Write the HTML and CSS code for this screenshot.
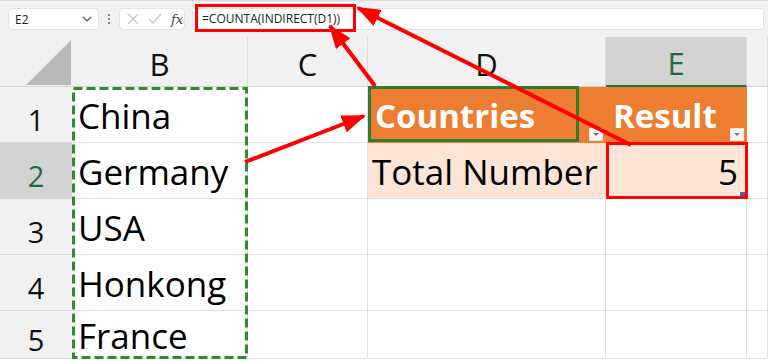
FILE: index.html
```html
<!DOCTYPE html>
<html lang="en">
<head>
    <meta charset="UTF-8">
    <meta name="viewport" content="width=device-width, initial-scale=1.0">
    <title>COUNTA with INDIRECT</title>
    <link rel="stylesheet" href="styles.css">
</head>
<body>
<div class="sheet">
    <div class="formula-bar">
        <div class="name-box">
            <span>E2</span>
            <svg class="chevron" width="10" height="6" viewBox="0 0 10 6"><path d="M1 1 L5 5 L9 1" fill="none" stroke="#555" stroke-width="1.2"/></svg>
        </div>
        <div class="dots"><i></i><i></i><i></i></div>
        <div class="fx-box">
            <svg width="12" height="12" viewBox="0 0 12 12"><path d="M1 1 L11 11 M11 1 L1 11" stroke="#c6c6c6" stroke-width="1.3"/></svg>
            <svg width="14" height="12" viewBox="0 0 14 12"><path d="M1 6 L5 10 L13 1" fill="none" stroke="#c6c6c6" stroke-width="1.3"/></svg>
            <span class="fx">fx</span>
        </div>
        <div class="formula-input">=COUNTA(INDIRECT(D1))</div>
    </div>

    <div class="grid">
        <div class="corner">
            <svg width="72" height="50" viewBox="0 0 72 50"><polygon points="26,48 71,3 71,48" fill="#b9b9b9"/></svg>
        </div>
        <div class="col-head">B</div>
        <div class="col-head">C</div>
        <div class="col-head">D</div>
        <div class="col-head active">E</div>
        <div class="col-head"></div>

        <div class="row-head">1</div>
        <div class="cell">China</div>
        <div class="cell"></div>
        <div class="cell table-head">Countries<span class="filter"></span></div>
        <div class="cell table-head">Result<span class="filter"></span></div>
        <div class="cell"></div>

        <div class="row-head active">2</div>
        <div class="cell">Germany</div>
        <div class="cell"></div>
        <div class="cell table-row">Total Number</div>
        <div class="cell table-row number">5<span class="handle"></span></div>
        <div class="cell"></div>

        <div class="row-head">3</div>
        <div class="cell">USA</div>
        <div class="cell"></div>
        <div class="cell"></div>
        <div class="cell"></div>
        <div class="cell"></div>

        <div class="row-head">4</div>
        <div class="cell">Honkong</div>
        <div class="cell"></div>
        <div class="cell"></div>
        <div class="cell"></div>
        <div class="cell"></div>

        <div class="row-head last">5</div>
        <div class="cell last">France</div>
        <div class="cell last"></div>
        <div class="cell last"></div>
        <div class="cell last"></div>
        <div class="cell last"></div>
    </div>

    <!-- highlight boxes and arrows drawn over the sheet -->
    <svg class="overlay" width="768" height="361" viewBox="0 0 768 361">
        <defs>
            <marker id="head" markerUnits="userSpaceOnUse" markerWidth="24" markerHeight="18" refX="22" refY="9" orient="auto">
                <polygon points="0,0 24,9 0,18" fill="#f00"/>
            </marker>
        </defs>
        <rect x="196.5" y="5.5" width="158" height="25" fill="none" stroke="#f00" stroke-width="3"/>
        <rect x="73.5" y="88.5" width="173" height="269" fill="none" stroke="#2e8b2e" stroke-width="3" stroke-dasharray="9 4"/>
        <rect x="369.5" y="87.5" width="208" height="53" fill="none" stroke="#2f7d2a" stroke-width="3"/>
        <rect x="607.5" y="143.5" width="139" height="54" fill="none" stroke="#f00" stroke-width="3"/>
        <line x1="631" y1="145" x2="358" y2="8" stroke="#f00" stroke-width="4" marker-end="url(#head)"/>
        <line x1="375" y1="86" x2="330" y2="26" stroke="#f00" stroke-width="4" marker-end="url(#head)"/>
        <line x1="245" y1="162" x2="364" y2="116" stroke="#f00" stroke-width="4" marker-end="url(#head)"/>
    </svg>
</div>
</body>
</html>
```

FILE: styles.css
```css
body {
    margin: 0;
    font-family: "Open Sans", sans-serif;
    background-color: #fff;
}

.sheet {
    position: relative;
    width: 768px;
    height: 361px;
    overflow: hidden;
}

.formula-bar {
    display: flex;
    align-items: flex-start;
    height: 37px;
    box-sizing: border-box;
    padding: 7px 4px 0 8px;
    background-color: #f1f1f1;
    border-top: 1px solid #dcdcdc;
}

.name-box {
    display: flex;
    align-items: center;
    justify-content: space-between;
    width: 91px;
    height: 22px;
    box-sizing: border-box;
    padding: 0 6px 0 6px;
    background-color: #fff;
    border: 1px solid #e3e3e3;
    border-radius: 4px;
    font-size: 12px;
    color: #222;
}

.dots {
    display: flex;
    flex-direction: column;
    align-items: center;
    justify-content: center;
    gap: 2px;
    width: 20px;
    height: 22px;
}

.dots i {
    width: 2px;
    height: 2px;
    background-color: #666;
    border-radius: 50%;
}

.fx-box {
    display: flex;
    align-items: center;
    gap: 9px;
    width: 66px;
    height: 22px;
    box-sizing: border-box;
    padding-left: 7px;
    background-color: #fff;
    border: 1px solid #e3e3e3;
    border-radius: 4px;
}

.fx {
    font-family: "DejaVu Serif", serif;
    font-style: italic;
    font-size: 13px;
    color: #444;
}

.formula-input {
    flex: 1;
    height: 22px;
    box-sizing: border-box;
    margin-left: 7px;
    padding-left: 9px;
    background-color: #fff;
    border: 1px solid #e3e3e3;
    border-radius: 3px;
    font-size: 12px;
    line-height: 20px;
    color: #222;
}

.grid {
    display: grid;
    grid-template-columns: 72px 176px 120px 238px 141px 21px;
    grid-template-rows: 50px 56px 56px 56px 56px 48px;
    background-color: #f1f1f1;
}

.corner {
    border-bottom: 1px solid #d4d4d4;
}

.corner svg {
    display: block;
}

.col-head {
    display: flex;
    align-items: center;
    justify-content: center;
    box-sizing: border-box;
    padding-top: 4px;
    border-right: 1px solid #dadada;
    border-bottom: 1px solid #d4d4d4;
    font-size: 31px;
    color: #111;
}

.col-head.active {
    background-color: #d3d3d3;
    border-bottom: 2px solid #217346;
    color: #1d6b40;
}

.row-head {
    display: flex;
    align-items: flex-end;
    justify-content: center;
    box-sizing: border-box;
    padding-bottom: 2px;
    border-bottom: 1px solid #d8d8d8;
    font-size: 29px;
    line-height: 40px;
    color: #111;
}

.row-head.active {
    background-color: #d3d3d3;
    color: #1d6b40;
}

.cell {
    position: relative;
    display: flex;
    align-items: flex-end;
    box-sizing: border-box;
    padding: 0 0 5px 6px;
    background-color: #fff;
    border-right: 1px solid #e1e1e1;
    border-bottom: 1px solid #e1e1e1;
    font-size: 35px;
    line-height: 42px;
    color: #000;
    white-space: nowrap;
}

.row-head.last {
    padding-bottom: 0;
    line-height: 36px;
}

.cell.last {
    padding-bottom: 1px;
}

.table-head {
    background-color: #ed7d31;
    border-right-color: #ed7d31;
    border-bottom-color: #ed7d31;
    color: #fff;
    font-weight: 700;
    font-size: 33px;
    padding-left: 7px;
}

.table-row {
    background-color: #fce4d6;
    border-right-color: #fce4d6;
    padding-left: 4px;
}

.number {
    justify-content: flex-end;
    padding-right: 8px;
}

.filter {
    position: absolute;
    right: 2px;
    bottom: 1px;
    width: 12px;
    height: 11px;
    background-color: #f6f6f6;
    border: 1px solid #e6e6e6;
}

.filter::after {
    content: "";
    position: absolute;
    left: 3px;
    top: 4px;
    border-left: 3px solid transparent;
    border-right: 3px solid transparent;
    border-top: 3px solid #777;
}

.handle {
    position: absolute;
    right: -1px;
    bottom: -1px;
    width: 7px;
    height: 7px;
    background-color: #5560b0;
}

.overlay {
    position: absolute;
    top: 0;
    left: 0;
    pointer-events: none;
}
```
